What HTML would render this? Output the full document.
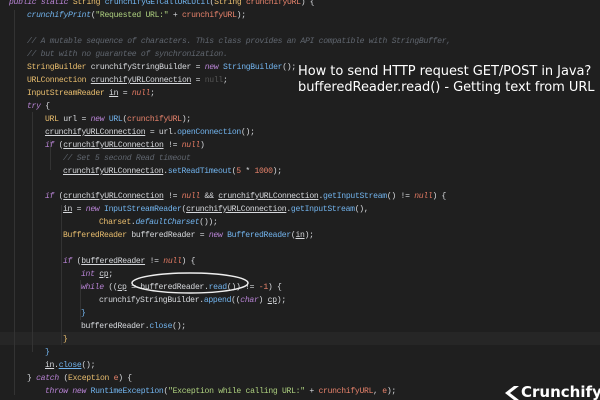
<!DOCTYPE html>
<html><head><meta charset="utf-8"><style>
html,body{margin:0;width:600px;height:400px;overflow:hidden;}
body{background:#1f1f1f;position:relative;font-family:"Liberation Mono",monospace;}
.l{position:absolute;left:0;height:13px;line-height:13px;font-size:8.1px;letter-spacing:-0.3px;color:#d6d8dc;white-space:pre;}
.k{color:#b984d6;font-style:italic}.t{color:#e8bd6e}.v{color:#e6826b}.m{color:#72b4ee}.s{color:#add07f}.c{color:#60666f;font-style:italic}.n{color:#e47a63;font-style:italic}.u{text-decoration:underline}.d{color:#555}
.hl{position:absolute;left:0;width:600px;height:13px;top:332px;background:#262626}
.g{position:absolute;width:1px;background:#333}
.title{position:absolute;left:298px;top:64px;color:#fff;font-family:"DejaVu Sans","Liberation Sans",sans-serif;font-size:13px;line-height:16px;letter-spacing:-0.05px}
</style></head><body>
<div class="hl"></div>
<div class="g" style="left:14px;top:10px;height:385px"></div>
<div class="g" style="left:32px;top:112px;height:240px"></div>
<div class="g" style="left:50px;top:140px;height:30px"></div>
<div class="g" style="left:61px;top:205px;height:140px"></div>
<div class="g" style="left:80px;top:280px;height:40px"></div>
<div class="l" style="top:-4px;left:9px"><span class="k">public static</span> <span class="t">String</span> <span class="m">crunchifyGETCallURLUtil</span>(<span class="t">String</span> <span class="v">crunchifyURL</span>) {</div>
<div class="l" style="top:9px;left:27px"><span class="m" style="font-style:italic">crunchifyPrint</span>(<span class="s">"Requested URL:"</span> + <span class="v">crunchifyURL</span>);</div>
<div class="l c" style="top:35px;left:27px">// A mutable sequence of characters. This class provides an API compatible with StringBuffer,</div>
<div class="l c" style="top:48px;left:27px">// but with no guarantee of synchronization.</div>
<div class="l" style="top:61px;left:27px"><span class="t">StringBuilder</span> crunchifyStringBuilder = <span class="k">new</span> <span class="m">StringBuilder</span>();</div>
<div class="l" style="top:74px;left:27px"><span class="t">URLConnection</span> <span class="u">crunchifyURLConnection</span> = <span class="d">null</span>;</div>
<div class="l" style="top:87px;left:27px"><span class="t">InputStreamReader</span> <span class="u">in</span> = <span class="n">null</span>;</div>
<div class="l" style="top:100px;left:27px"><span class="k">try</span> {</div>
<div class="l" style="top:113px;left:45px"><span class="t">URL</span> url = <span class="k">new</span> <span class="m">URL</span>(<span class="v">crunchifyURL</span>);</div>
<div class="l" style="top:126px;left:45px"><span class="u">crunchifyURLConnection</span> = url.<span class="m">openConnection</span>();</div>
<div class="l" style="top:139px;left:45px"><span class="k">if</span> (<span class="u">crunchifyURLConnection</span> != <span class="n">null</span>)</div>
<div class="l c" style="top:152px;left:63px">// Set 5 second Read timeout</div>
<div class="l" style="top:165px;left:63px"><span class="u">crunchifyURLConnection</span>.<span class="m">setReadTimeout</span>(<span class="v">5</span> * <span class="v">1000</span>);</div>
<div class="l" style="top:190px;left:45px"><span class="k">if</span> (<span class="u">crunchifyURLConnection</span> != <span class="n">null</span> &amp;&amp; <span class="u">crunchifyURLConnection</span>.<span class="m">getInputStream</span>() != <span class="n">null</span>) {</div>
<div class="l" style="top:203px;left:63px"><span class="u">in</span> = <span class="k">new</span> <span class="m">InputStreamReader</span>(<span class="u">crunchifyURLConnection</span>.<span class="m">getInputStream</span>(),</div>
<div class="l" style="top:216px;left:99px"><span class="t">Charset</span>.<span class="m" style="font-style:italic">defaultCharset</span>());</div>
<div class="l" style="top:229px;left:63px"><span class="t">BufferedReader</span> bufferedReader = <span class="k">new</span> <span class="m">BufferedReader</span>(<span class="u">in</span>);</div>
<div class="l" style="top:255px;left:63px"><span class="k">if</span> (<span class="u">bufferedReader</span> != <span class="n">null</span>) {</div>
<div class="l" style="top:268px;left:81px"><span class="k">int</span> <span class="u">cp</span>;</div>
<div class="l" style="top:281px;left:81px"><span class="k">while</span> ((<span class="u">cp</span> = bufferedReader.<span class="m">read</span>()) != <span class="v">-1</span>) {</div>
<div class="l" style="top:294px;left:99px">crunchifyStringBuilder.<span class="m">append</span>((<span class="k">char</span>) <span class="u">cp</span>);</div>
<div class="l" style="top:307px;left:81px"><span class="m">}</span></div>
<div class="l" style="top:320px;left:81px">bufferedReader.<span class="m">close</span>();</div>
<div class="l" style="top:333px;left:63px"><span class="t">}</span></div>
<div class="l" style="top:346px;left:45px"><span class="m">}</span></div>
<div class="l" style="top:359px;left:45px"><span class="u">in</span>.<span class="m u">close</span>();</div>
<div class="l" style="top:372px;left:27px">} <span class="k">catch</span> (<span class="t">Exception</span> <span class="v">e</span>) {</div>
<div class="l" style="top:385px;left:45px"><span class="k">throw new</span> <span class="m">RuntimeException</span>(<span class="s">"Exception while calling URL:"</span> + <span class="v">crunchifyURL</span>, <span class="v">e</span>);</div>
<svg style="position:absolute;left:0;top:0" width="600" height="400">
<ellipse cx="190" cy="283" rx="58" ry="10" fill="none" stroke="#eee" stroke-width="1.5"/>
<path d="M519 386 L510 393 L519 400 L514 400 L505 393 L514 386 Z" fill="#fff"/>
</svg>
<div class="title">How to send HTTP request GET/POST in Java?<br>bufferedReader.read() - Getting text from URL</div>
<div style="position:absolute;left:521px;top:382px;color:#fff;font-family:'DejaVu Sans',sans-serif;font-weight:bold;font-size:15px;line-height:20px">Crunchify</div>
</body></html>
